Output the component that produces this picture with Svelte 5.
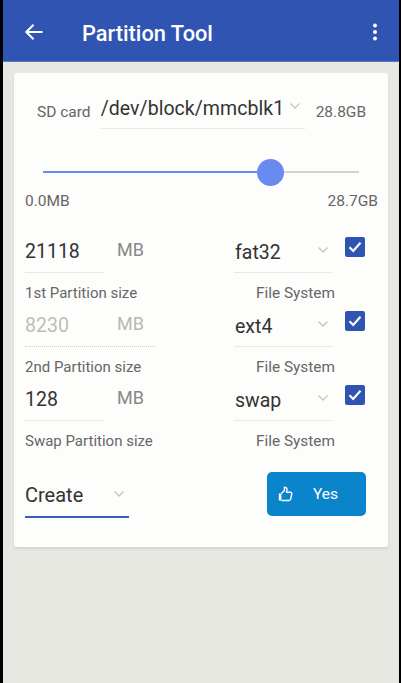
<script lang="ts">
  const parts = [
    { size: '21118', label: '1st Partition size', fs: 'fat32', width: 79 },
    { size: '8230', label: '2nd Partition size', fs: 'ext4', width: 130, locked: true },
    { size: '128', label: 'Swap Partition size', fs: 'swap', width: 79 }
  ]
</script>

{#snippet chevron()}
  <svg class="chev" width="12" height="8" viewBox="0 0 12 8"><path d="M1.5 1.5 6 6l4.5-4.5" fill="none" stroke="#c4c4c0" stroke-width="1.3" /></svg>
{/snippet}

<div class="screen">
  <header>
    <svg width="20" height="18" viewBox="0 0 20 18"><path d="M18.5 9H2.5M9.5 1.8 2.3 9l7.2 7.2" fill="none" stroke="#fff" stroke-width="2" /></svg>
    <h1>Partition Tool</h1>
    <svg class="more" width="6" height="18" viewBox="0 0 6 18"><circle cx="3" cy="2.5" r="2" fill="#fff" /><circle cx="3" cy="9" r="2" fill="#fff" /><circle cx="3" cy="15.5" r="2" fill="#fff" /></svg>
  </header>

  <main>
    <section class="card">
      <div class="sd">
        <span class="sd-label">SD card</span>
        <div class="sd-select">
          <span>/dev/block/mmcblk1</span>
          {@render chevron()}
        </div>
        <span class="sd-label">28.8GB</span>
      </div>

      <div class="slider">
        <div class="fill"></div>
        <div class="thumb"></div>
        <div class="rest"></div>
      </div>
      <div class="range">
        <span>0.0MB</span>
        <span>28.7GB</span>
      </div>

      <div class="parts">
        {#each parts as p}
          <div class="part">
            <div class="field" class:locked={p.locked}>
              <div class="size" style="width: {p.width}px">{p.size}</div>
              <span class="unit">MB</span>
            </div>
            <div class="fs">{p.fs}{@render chevron()}</div>
            <div class="check">
              <svg width="14" height="12" viewBox="0 0 14 12"><path d="M1.5 6.2 5.2 10 12.5 1.8" fill="none" stroke="#fff" stroke-width="2.1" /></svg>
            </div>
            <div class="cap">{p.label}</div>
            <div class="cap right">File System</div>
          </div>
        {/each}
      </div>

      <div class="actions">
        <div class="mode">Create{@render chevron()}</div>
        <button>
          <svg width="15" height="16" viewBox="0 0 15 16"><path d="M.8 7.5h2.6v7H.8z" fill="#fff" /><path d="M3.4 7.5 6.4 4.5V1.2c1.7 0 2.6 1 2.6 2.4L8.5 6.3h3.9c1 0 1.6.8 1.4 1.7l-1.1 5.2c-.2.8-.8 1.3-1.6 1.3H3.4" fill="none" stroke="#fff" stroke-width="1.4" stroke-linejoin="round" /></svg>
          <span>Yes</span>
        </button>
      </div>
    </section>
  </main>
</div>

<style>
  :global(body) {
    background: #000;
    font-family: Roboto, "Liberation Sans", sans-serif;
  }
  .screen {
    margin: 0 2px 0 3px;
    height: 683px;
    background: #e8e8e3;
    display: flex;
    flex-direction: column;
  }
  header {
    height: 62px;
    flex: none;
    background: #3054b2;
    border-bottom: 1px solid #5a78c4;
    box-sizing: border-box;
    display: flex;
    align-items: center;
    padding: 3px 21px 0 21px;
    color: #fff;
  }
  h1 {
    margin: 2px 0 0 38px;
    font-size: 21.8px;
    font-weight: 500;
    flex: 1;
  }
  main {
    padding: 11px 11px 0;
  }
  .card {
    height: 474px;
    box-sizing: border-box;
    background: #fdfdfc;
    border-radius: 3px;
    box-shadow: 0 2px 3px #d4d4cf;
    padding: 0 11px;
    color: #333;
  }
  .sd {
    height: 56px;
    display: flex;
    align-items: flex-end;
    padding-left: 12px;
  }
  .sd-label {
    font-size: 15.5px;
    color: #666;
    line-height: 20px;
    padding-bottom: 7px;
  }
  .sd-select {
    width: 204px;
    height: 56px;
    box-sizing: border-box;
    margin: 0 11px 0 10px;
    border-bottom: 1px solid #e8e8e4;
    display: flex;
    align-items: center;
    padding-top: 15px;
    font-size: 19.5px;
    letter-spacing: 0.05px;
    white-space: nowrap;
  }
  .sd-select .chev {
    margin: -5px 0 0 5px;
  }
  .slider {
    height: 2px;
    margin: 42px 18px 0;
    display: flex;
    align-items: center;
  }
  .fill {
    width: 214px;
    height: 2.5px;
    background: #6a8af0;
  }
  .thumb {
    width: 27px;
    height: 27px;
    flex: none;
    border-radius: 50%;
    background: #6a8af0;
  }
  .rest {
    flex: 1;
    height: 1.5px;
    background: #d2d2ce;
  }
  .range {
    display: flex;
    justify-content: space-between;
    margin: 18px -1px 0 0;
    font-size: 15.5px;
    line-height: 20px;
    color: #666;
  }
  .parts {
    margin-top: 22px;
  }
  .part {
    display: grid;
    grid-template-columns: 209px 99px 1fr;
    grid-template-rows: 40px 34px;
    height: 74px;
  }
  .field {
    display: flex;
    height: 40px;
    position: relative;
  }
  .size {
    height: 40px;
    box-sizing: border-box;
    border-bottom: 1px solid #e8e8e4;
    font-size: 19.5px;
    line-height: 38px;
  }
  .unit {
    position: absolute;
    left: 92px;
    top: 4px;
    font-size: 18px;
    line-height: 26px;
    color: #888;
  }
  .locked .size {
    color: #bdbdb9;
    border-bottom: 1px dotted #cfcfcb;
  }
  .locked .unit {
    color: #b8b8b4;
  }
  .fs {
    height: 40px;
    box-sizing: border-box;
    border-bottom: 1px solid #e8e8e4;
    display: flex;
    align-items: center;
    justify-content: space-between;
    padding: 0 4px 1px 1px;
    font-size: 19.5px;
  }
  .fs .chev {
    margin-top: -4px;
  }
  .check {
    width: 20px;
    height: 20px;
    margin: 4px 0 0 12px;
    border-radius: 2px;
    background: #3054b2;
    display: flex;
    align-items: center;
    justify-content: center;
  }
  .cap {
    font-size: 15px;
    color: #666;
    line-height: 20px;
    margin-top: 10px;
    white-space: nowrap;
  }
  .cap.right {
    grid-column: 2;
    font-size: 15.4px;
    text-align: right;
    margin-right: -2px;
  }
  .actions {
    display: flex;
    justify-content: space-between;
    align-items: flex-start;
    margin: 18px 0 0;
  }
  .mode {
    width: 104px;
    height: 45px;
    box-sizing: border-box;
    border-bottom: 2px solid #3c5cb8;
    display: flex;
    align-items: center;
    justify-content: space-between;
    padding: 1px 4px 0 0;
    font-size: 20px;
  }
  .mode .chev {
    margin-top: -3px;
  }
  button {
    width: 99px;
    height: 44px;
    margin: -1px 11px 0 0;
    border: none;
    border-radius: 5px;
    background: #0a84cb;
    color: #fff;
    display: flex;
    align-items: center;
    padding: 0 0 0 11px;
    font: 15.5px Roboto, "Liberation Sans", sans-serif;
  }
  button span {
    margin-left: 20px;
  }
</style>
